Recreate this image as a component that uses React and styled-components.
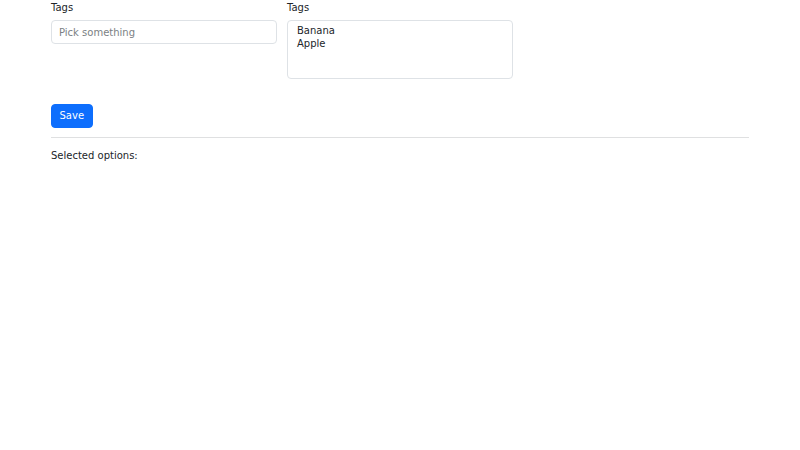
import styled, { createGlobalStyle } from "styled-components";

const GlobalStyle = createGlobalStyle`
  body {
    margin: 0;
    background: #fff;
    color: #212529;
    font-family: "DejaVu Sans", sans-serif;
    font-size: 10px;
    line-height: 15px;
  }
`;

const Container = styled.div`
  width: 698px;
  margin: 0 auto;
`;

const Row = styled.div`
  display: flex;
  gap: 10px;
  margin-bottom: 25px;
`;

const Field = styled.div`
  width: 226px;
  display: flex;
  flex-direction: column;
`;

const Label = styled.label`
  display: block;
  margin-bottom: 5px;
  line-height: 15px;
`;

const Input = styled.input`
  box-sizing: border-box;
  width: 100%;
  height: 24px;
  padding: 0 7px;
  border: 1px solid #dee2e6;
  border-radius: 4px;
  font-family: inherit;
  font-size: 10px;
  color: #212529;
  outline: none;

  &::placeholder {
    color: #7b7f84;
  }
`;

const MultiSelect = styled.div`
  box-sizing: border-box;
  width: 100%;
  height: 59px;
  padding: 4px 9px;
  border: 1px solid #dee2e6;
  border-radius: 4px;
`;

const Option = styled.div`
  line-height: 12.5px;
`;

const Button = styled.button`
  display: block;
  height: 23.5px;
  padding: 0 7.5px;
  border: 1px solid #0d6efd;
  border-radius: 4px;
  background: #0d6efd;
  color: #fff;
  font-family: inherit;
  font-size: 10px;
`;

const Divider = styled.hr`
  margin: 9.5px 0;
  border: 0;
  border-top: 1px solid #dfe0e1;
`;

const Text = styled.p`
  margin: 0;
`;

export default function App() {
  return (
    <>
      <GlobalStyle />
      <Container>
        <Row>
          <Field>
            <Label>Tags</Label>
            <Input placeholder="Pick something" />
          </Field>
          <Field>
            <Label>Tags</Label>
            <MultiSelect>
              <Option>Banana</Option>
              <Option>Apple</Option>
            </MultiSelect>
          </Field>
        </Row>
        <Button>Save</Button>
        <Divider />
        <Text>Selected options:</Text>
      </Container>
    </>
  );
}
